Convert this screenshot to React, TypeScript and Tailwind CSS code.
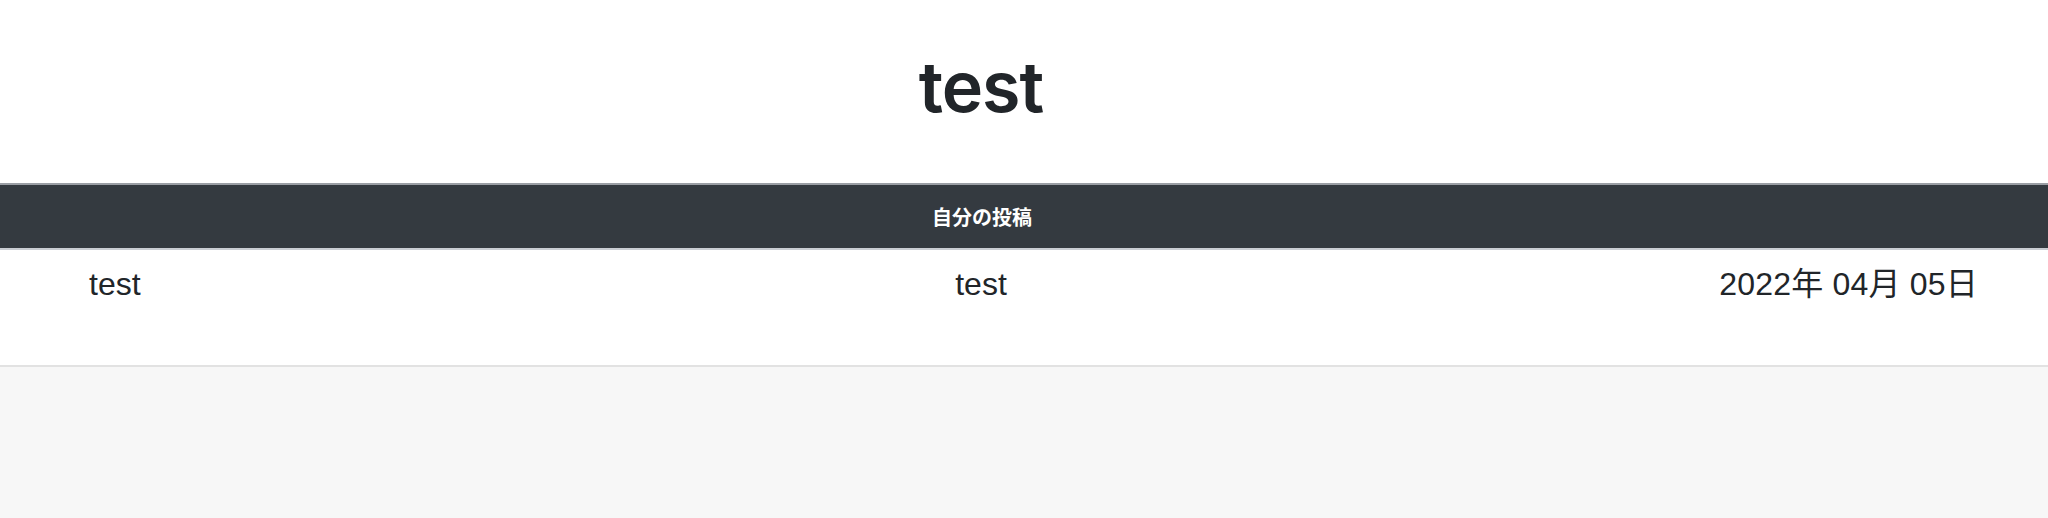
const posts = [{ title: 'test', body: 'test', date: '2022年 04月 05日' }];

export default function App() {
  return (
    <div
      className="min-h-[518px] bg-[#f7f7f7] text-[#212529]"
      style={{ fontFamily: '"Liberation Sans", "Noto Sans CJK JP", sans-serif' }}
    >
      {/* page title */}
      <div className="h-[183px] bg-white pt-[52px]">
        <h1
          className="pr-[86px] text-center text-[70px] font-semibold leading-none tracking-[-1px]"
          style={{ fontFamily: 'Inter, "Liberation Sans", sans-serif' }}
        >
          test
        </h1>
      </div>

      {/* section header */}
      <div className="flex h-[67px] items-center justify-center border-t-2 border-b-2 border-t-[#9a9ea4] border-b-[#c9cdd3] bg-[#343a40] pr-[84px]">
        <span className="text-[20px] font-bold text-white" style={{ fontFamily: '"Noto Sans CJK JP", sans-serif' }}>
          自分の投稿
        </span>
      </div>

      {/* post rows */}
      {posts.map((p, i) => (
        <div
          key={i}
          className="grid h-[117px] grid-cols-[931px_100px_1fr] border-b-2 border-[#e2e2e2] bg-white pt-[10px] text-[32px] leading-[48px]"
        >
          <div className="pl-[89px]">{p.title}</div>
          <div className="text-center">{p.body}</div>
          <div className="pr-[70px] text-right tracking-[0.2px]">{p.date}</div>
        </div>
      ))}
    </div>
  );
}
